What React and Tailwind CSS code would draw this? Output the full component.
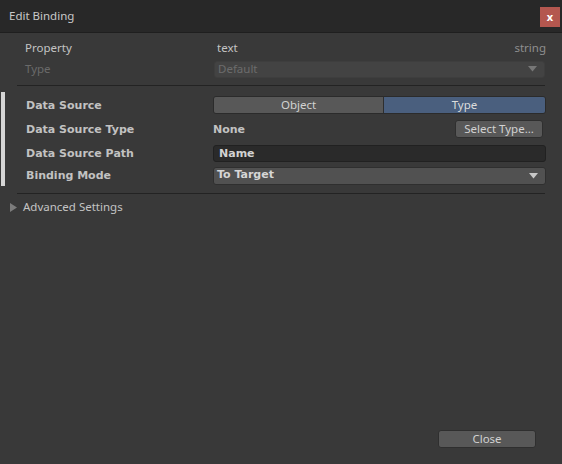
import React from 'react';

const sans = { fontFamily: '"Noto Sans", "Open Sans", sans-serif' };
const bold = { fontFamily: '"DejaVu Sans", Verdana, sans-serif' };

function DownArrow({ color = '#c4c4c4' }) {
  return (
    <svg width="9" height="6" viewBox="0 0 9 6" aria-hidden="true">
      <path d="M0 0 H9 L4.5 5.5 Z" fill={color} />
    </svg>
  );
}

function Label({ children }) {
  return (
    <div className="w-[188px] shrink-0 pl-[1px] text-[11px] font-bold text-[#c2c2c2] leading-none" style={bold}>
      {children}
    </div>
  );
}

export default function App() {
  return (
    <div className="w-[562px] h-[464px] bg-[#393939] flex flex-col overflow-hidden" style={sans}>
      {/* Title bar */}
      <div className="h-[33px] shrink-0 bg-[#282828] border-b border-[#1f1f1f] flex items-center justify-between pl-[9px] pr-[2px]">
        <span className="text-[11.5px] text-[#c8c8c8] leading-none">Edit Binding</span>
        <button className="w-[20px] h-[20px] bg-[#b4574f] text-white text-[11px] font-bold leading-none flex items-center justify-center mt-[1px]">
          x
        </button>
      </div>

      {/* Property header */}
      <div className="pt-[5px] pl-[25px] pr-[16px]">
        <div className="h-[20px] flex items-center">
          <div className="w-[192px] text-[11.5px] text-[#c4c4c4]">Property</div>
          <div className="flex-1 text-[11.5px] text-[#c4c4c4]">text</div>
          <div className="text-[11.5px] text-[#8f8f8f]">string</div>
        </div>
        <div className="h-[18px] mt-[2px] flex items-center">
          <div className="w-[189px] text-[11.5px] text-[#6a6a6a]">Type</div>
          <div className="flex-1 mr-[1px] h-[17px] rounded-[3px] bg-[#434343] border border-[#3e3e3e] flex items-center justify-between pl-[3px] pr-[7px]">
            <span className="text-[11.5px] text-[#6c6c6c] leading-none">Default</span>
            <DownArrow color="#777777" />
          </div>
        </div>
      </div>

      <div className="mt-[7px] mx-[17px] h-px bg-[#232323]" />

      {/* Binding section */}
      <div className="mt-[6px] flex">
        <div className="w-[4px] ml-[1px] bg-[#d6d6d6]" />
        <div className="flex-1 pl-[20px] pr-[16px] pt-[4px] pb-[2px] flex flex-col">
          <div className="h-[18px] flex items-center">
            <Label>Data Source</Label>
            <div className="flex-1 h-[18px] flex rounded-[3px] border border-[#2b2b2b] overflow-hidden">
              <div className="w-[170px] bg-[#585858] border-r border-[#2e2e2e] text-[11.5px] text-[#d2d2d2] flex items-center justify-center">Object</div>
              <div className="flex-1 bg-[#4a5f7e] text-[11.5px] text-[#dcdcdc] flex items-center justify-center">Type</div>
            </div>
          </div>
          <div className="h-[18px] mt-[6px] flex items-center">
            <Label>Data Source Type</Label>
            <div className="flex-1 flex items-center justify-between pr-[3px]">
              <span className="text-[11px] font-bold text-[#c2c2c2] mt-[3px]" style={bold}>None</span>
              <button className="w-[88px] h-[18px] rounded-[3px] bg-[#585858] border border-[#2f2f2f] text-[11.5px] text-[#d2d2d2] leading-none">
                Select Type...
              </button>
            </div>
          </div>
          <div className="h-[17px] mt-[7px] flex items-center">
            <Label>Data Source Path</Label>
            <div className="flex-1 h-[17px] rounded-[3px] bg-[#2a2a2a] border border-[#212121] flex items-center pl-[5px]">
              <span className="text-[11px] font-bold text-[#d2d2d2] mt-[1px]" style={bold}>Name</span>
            </div>
          </div>
          <div className="h-[17px] mt-[5px] flex items-center">
            <Label>Binding Mode</Label>
            <div className="flex-1 h-[18px] rounded-[3px] bg-[#515151] border border-[#2f2f2f] flex items-center justify-between pl-[3px] pr-[7px]">
              <span className="text-[11px] font-bold text-[#d6d6d6]" style={bold}>To Target</span>
              <DownArrow color="#c8c8c8" />
            </div>
          </div>
        </div>
      </div>

      <div className="mt-[7px] mx-[17px] h-px bg-[#232323]" />

      <div className="h-[20px] mt-[3px] flex items-center pl-[10px] gap-[6px]">
        <svg width="7" height="9" viewBox="0 0 7 9" aria-hidden="true">
          <path d="M0 0 L7 4.5 L0 9 Z" fill="#7c7c7c" />
        </svg>
        <span className="text-[11.5px] text-[#c4c4c4]">Advanced Settings</span>
      </div>

      <div className="flex-1" />

      <div className="flex justify-end pr-[26px] pb-[16px]">
        <button className="w-[98px] h-[18px] rounded-[3px] bg-[#585858] border border-[#2f2f2f] text-[11.5px] text-[#d2d2d2] leading-none">
          Close
        </button>
      </div>
    </div>
  );
}
